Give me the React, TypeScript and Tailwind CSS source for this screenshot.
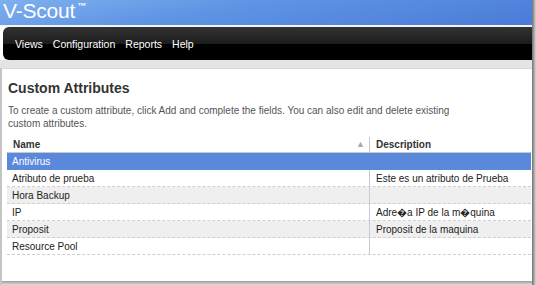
const rows = [
  { name: "Antivirus", desc: "", selected: true },
  { name: "Atributo de prueba", desc: "Este es un atributo de Prueba" },
  { name: "Hora Backup", desc: "" },
  { name: "IP", desc: "Adre\uFFFDa IP de la m\uFFFDquina" },
  { name: "Proposit", desc: "Proposit de la maquina" },
  { name: "Resource Pool", desc: "" },
];

const NAV = ["Views", "Configuration", "Reports", "Help"];

export default function App() {
  return (
    <div className="flex w-[536px] h-[285px] bg-white overflow-hidden font-['Liberation_Sans',Arial,sans-serif]">
      {/* main window */}
      <div className="flex flex-col w-[532px] h-full">
        {/* brand header */}
        <div className="h-[25px] flex items-start bg-[linear-gradient(170deg,#7eb0ee_0%,#5f94e4_40%,#4a7bd8_100%)] px-[3px]">
          <span className="text-white text-[21px] leading-[22px] tracking-[-0.2px]">V-Scout</span>
          <span className="text-white text-[9px] leading-none mt-[2px] ml-[2px] font-bold">™</span>
        </div>
        <div className="h-[2px] bg-[#f2f4f8]" />

        {/* nav bar */}
        <div className="h-[33px] ml-[3px] rounded-l-[6px] flex flex-col overflow-hidden">
          <div className="flex-1 bg-[linear-gradient(#333333,#1c1c1c)]" />
          <div className="flex-1 bg-black" />
          <div className="absolute mt-[11px] flex gap-[10px] pl-[12px] text-white text-[10.5px] leading-[13px]">
            {NAV.map((n) => (
              <span key={n}>{n}</span>
            ))}
          </div>
        </div>
        <div className="h-[8px] bg-[#e4e4e4]" />

        {/* content */}
        <div className="flex-1 flex flex-col border-l-2 border-[#c4c4c4] border-t border-t-[#d8d8d8] bg-white">
          <div className="pl-[6px] pt-[10px]">
            <h1 className="text-[14px] leading-[18px] font-bold text-[#333333]">Custom Attributes</h1>
            <p className="mt-[7px] text-[10px] leading-[13px] text-[#555555] w-[455px]">
              To create a custom attribute, click Add and complete the fields. You can also edit and delete existing
              custom attributes.
            </p>
          </div>

          {/* table */}
          <div className="ml-[5px] mt-[7px] w-[524px] text-[10px] leading-[13px]">
            <div className="flex h-[16px] border-b border-[#c8c8c8] font-bold text-[#333333]">
              <div className="w-[363px] flex items-center justify-between pl-[6px] pr-[4px] border-r border-[#c8c8d4]">
                <span>Name</span>
                <span className="text-[#a8a8a8] text-[9px]">▲</span>
              </div>
              <div className="flex-1 flex items-center pl-[6px]">Description</div>
            </div>
            {rows.map((r, i) => (
              <div
                key={r.name}
                className={
                  r.selected
                    ? "flex h-[17px] bg-[#5a89dc] text-white"
                    : i % 2 === 0
                    ? "flex h-[17px] bg-[#efefef] text-[#222222] border-b border-dashed border-[#cfcfcf]"
                    : "flex h-[17px] bg-white text-[#222222] border-b border-dashed border-[#cfcfcf]"
                }
              >
                <div
                  className={
                    r.selected
                      ? "w-[363px] flex items-center pl-[5px]"
                      : "w-[363px] flex items-center pl-[5px] border-r border-[#c8c8d8]"
                  }
                >
                  {r.name}
                </div>
                <div className="flex-1 flex items-center pl-[6px]">{r.desc}</div>
              </div>
            ))}
          </div>
          <div className="flex-1" />
          <div className="h-[4px] bg-[linear-gradient(#9a9a9a,#e0e0e0)]" />
        </div>
      </div>
      {/* window shadow */}
      <div className="w-[4px] h-full bg-[linear-gradient(90deg,#707070,#d8d8d8)]" />
    </div>
  );
}
